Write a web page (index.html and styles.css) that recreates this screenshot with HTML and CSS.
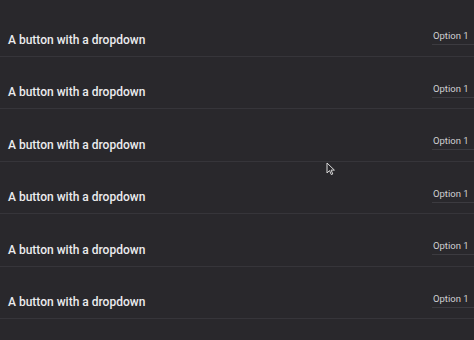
FILE: index.html
```html
<!DOCTYPE html>
<html>
<head>
<meta charset="utf-8">
<link rel="stylesheet" href="styles.css">
</head>
<body>
<div class="list">
  <div class="row"><span class="label">A button with a dropdown</span><div class="select">Option 1</div></div>
  <div class="row"><span class="label">A button with a dropdown</span><div class="select">Option 1</div></div>
  <div class="row"><span class="label">A button with a dropdown</span><div class="select">Option 1</div></div>
  <div class="row"><span class="label">A button with a dropdown</span><div class="select">Option 1</div></div>
  <div class="row"><span class="label">A button with a dropdown</span><div class="select">Option 1</div></div>
  <div class="row"><span class="label">A button with a dropdown</span><div class="select">Option 1</div></div>
</div>
<svg class="cursor" width="10" height="14" viewBox="0 0 10 14">
  <path d="M1 1 L1 11 L3.5 8.6 L5.3 12.6 L6.8 12 L5.1 8.1 L8.4 8.1 Z" fill="#28272b" stroke="#d8d8d8" stroke-width="1"/>
</svg>
</body>
</html>
```
FILE: styles.css
```css
html, body {
  margin: 0;
  padding: 0;
  background: #29282c;
  width: 474px;
  height: 340px;
  overflow: hidden;
}
body {
  position: relative;
  font-family: Roboto, "Liberation Sans", sans-serif;
}
.list {
  padding-top: 4px;
}
.row {
  box-sizing: border-box;
  height: 52.5px;
  padding: 18px 0 0 8px;
  border-bottom: 1px solid #36353a;
  display: flex;
  align-items: center;
  justify-content: space-between;
}
.label {
  font-size: 12px;
  font-weight: 500;
  color: #ececee;
  position: relative;
  top: 1px;
}
.select {
  width: 42px;
  box-sizing: border-box;
  padding: 0 0 3px 1px;
  font-size: 9.5px;
  line-height: 11px;
  color: #d0d0d2;
  border-bottom: 1px solid #3c3b40;
  margin-bottom: 2px;
}
.cursor {
  position: absolute;
  left: 326px;
  top: 162px;
}
```
